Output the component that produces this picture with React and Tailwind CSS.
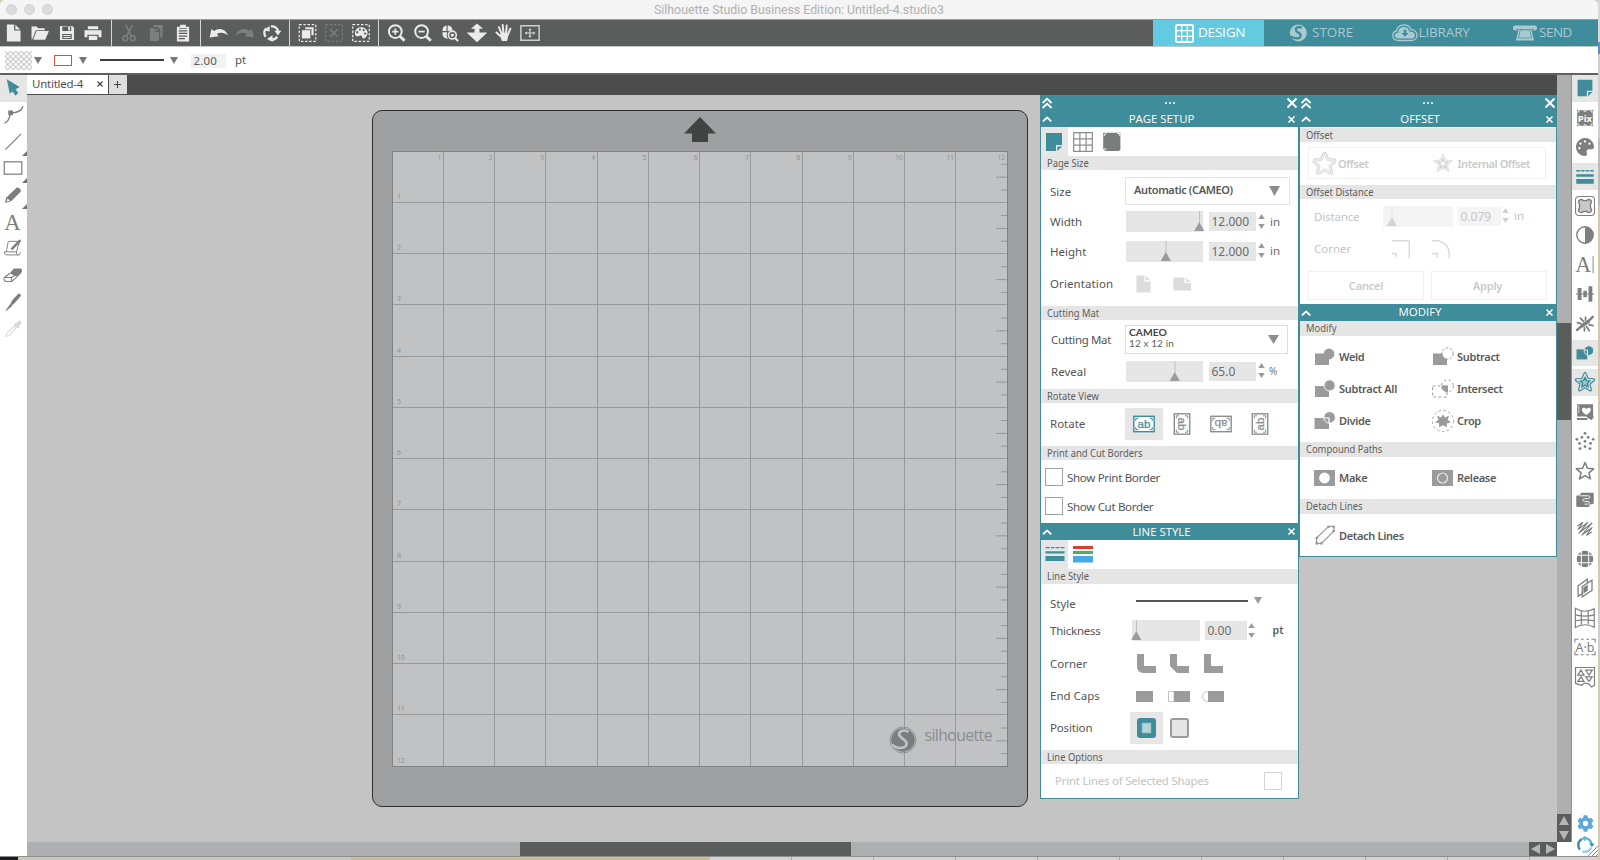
import React from "react";
import { FaPalette, FaCog } from "react-icons/fa";

const UI = "font-['Noto_Sans','Open_Sans',sans-serif]";

function Svg({ w = 20, h = 20, children, className = "" }) {
  return (
    <svg width={w} height={h} viewBox={`0 0 ${w} ${h}`} className={`shrink-0 block overflow-visible ${className}`}>
      {children}
    </svg>
  );
}

/* ---------- top toolbar ---------- */
const L = "#ebebeb";

function Arrows3({ color = L }) {
  return (
    <g fill="none" stroke={color} strokeWidth="2.6">
      <path d="M3.2 14 A7 7 0 0 1 4 5" />
      <path d="M9 3 A7 7 0 0 1 16.5 8" />
      <path d="M15.5 14 A7 7 0 0 1 7.5 16.6" />
      <g fill={color} stroke="none">
        <path d="M1 7 L7.5 2.5 L7.5 8.5 Z" />
        <path d="M12.5 7.5 L20 7.5 L16.3 12.6 Z" />
        <path d="M10.5 12.4 L10.8 19.4 L4.6 16.4 Z" />
      </g>
    </g>
  );
}

const toolGroups = [
  {
    w: "w-[112px]", items: [
      <path key="n" d="M3.5 1 H11.2 V7.4 H18 V19 H3.5 Z M12.5 1.2 L17.8 6.4 H12.5 Z" fill={L} />,
      <g key="o" fill={L}><path d="M1 17 V3 H6.5 L8 5 H15 V7 H5.5 L2.1 16 Z" /><path d="M6.3 8 H19.5 L15.5 17.3 H2.8 Z" /></g>,
      <path key="s" fillRule="evenodd" d="M2.5 2.5 H15.5 L17.5 4.5 V17.5 H2.5 Z M5 3 V8 H14.5 V3 Z M5 11 V16.5 H15 V11 Z M11.3 3.6 H13.3 V7.4 H11.3 Z M6.2 12 H13.8 V13.2 H6.2 Z M6.2 14.3 H13.8 V15.4 H6.2 Z" fill={L} />,
      <g key="p" fill={L}><path d="M4.5 2.8 H15.5 V6 H4.5 Z" /><path fillRule="evenodd" d="M1 7 H19 V14.5 H16 V11.8 H4 V14.5 H1 Z" /><path d="M5.5 13 H14.5 V17.5 H5.5 Z" /></g>,
    ],
  },
  {
    w: "w-[89px]", items: [
      <g key="c" fill="none" stroke="#7d7f7e" strokeWidth="1.7"><circle cx="5" cy="15.5" r="2.6" /><circle cx="13" cy="15.5" r="2.6" /><path d="M5.5 1.5 L11.6 13.2 M12.5 1.5 L6.4 13.2" /></g>,
      <g key="y" fill="#7d7f7e"><path d="M7.5 1.5 H17 V15 H14.6 V6 L11.5 3.5 H7.5 Z" /><path d="M3.5 5 H9.5 V9 H13.2 V18.5 H3.5 Z M10.4 5 L13.2 8 H10.4 Z" /></g>,
      <path key="v" fillRule="evenodd" fill={L} d="M3.5 3.3 H7 V1.3 H13 V3.3 H16.5 V19 H3.5 Z M5.5 7 V8.3 H14.5 V7 Z M5.5 9.8 V11.1 H14.5 V9.8 Z M5.5 12.6 V13.9 H14.5 V12.6 Z M5.5 15.4 V16.7 H12 V15.4 Z M6 4.6 V5.4 H14 V4.6 Z" />,
    ],
  },
  {
    w: "w-[89px]", items: [
      <path key="u" fill={L} d="M0 14.8 L2 5.8 L4.7 8 C9.5 4 17 5.5 19.5 12.6 C16 9.4 11.1 8.9 7.7 11 L9.8 13.4 Z" />,
      <path key="r" fill="#7d7f7e" d="M19.5 14.8 L17.5 5.8 L14.8 8 C10 4 2.5 5.5 0 12.6 C3.5 9.4 8.4 8.9 11.8 11 L9.7 13.4 Z" />,
      <Arrows3 key="a" />,
    ],
  },
  {
    w: "w-[89px]", items: [
      <g key="a"><rect x="0.7" y="1.2" width="17.6" height="17.6" fill="none" stroke={L} strokeWidth="1.3" strokeDasharray="2.6 1.8" /><path d="M7 4 H16 V12.5 H13.7 V6 H7 Z" fill={L} /><rect x="3.5" y="7" width="9" height="8.8" fill={L} /></g>,
      <g key="b" stroke="#7d7f7e" fill="none"><rect x="1.2" y="1.2" width="17.6" height="17.6" strokeWidth="1.3" strokeDasharray="2.6 1.8" /><path d="M6 6 L14 14 M14 6 L6 14" strokeWidth="1.6" /></g>,
      <g key="c"><rect x="1.2" y="1.2" width="17.6" height="17.6" fill="none" stroke={L} strokeWidth="1.3" strokeDasharray="2.6 1.8" /><path fillRule="evenodd" fill={L} d="M9.5 3.8 C14 3.6 17 6.5 17 9.8 C17 13.4 14.5 15.8 12.5 15.8 C10.5 15.8 12 12.8 10 12.6 C8 12.4 6.5 14.8 4.5 13 C2 10 4.5 4 9.5 3.8 Z M6 8 A1.2 1.2 0 1 0 6 10.4 A1.2 1.2 0 1 0 6 8 Z M8.8 5.2 A1.2 1.2 0 1 0 8.8 7.6 A1.2 1.2 0 1 0 8.8 5.2 Z M12.8 5.8 A1.2 1.2 0 1 0 12.8 8.2 A1.2 1.2 0 1 0 12.8 5.8 Z M14.4 9.4 A1.2 1.2 0 1 0 14.4 11.8 A1.2 1.2 0 1 0 14.4 9.4 Z" /></g>,
    ],
  },
  {
    w: "", items: [
      <g key="a" fill="none" stroke={L}><circle cx="8.2" cy="8.5" r="6.8" strokeWidth="2.1" /><path d="M12.9 13.2 L18 18.3" strokeWidth="3" /><path d="M8.2 5.2 V11.8 M4.9 8.5 H11.5" strokeWidth="1.8" /></g>,
      <g key="b" fill="none" stroke={L}><circle cx="8.5" cy="8.5" r="6.8" strokeWidth="2.1" /><path d="M13.2 13.2 L18.3 18.3" strokeWidth="3" /><path d="M5.2 8.5 H11.8" strokeWidth="1.8" /></g>,
      <g key="c"><path fill={L} d="M2 8 C2 4 3.5 2.3 6.3 2 V8 Z M7.5 2 C10.5 2 12.6 4 12.6 7 L9 8 H7.5 Z M2 9.2 H7 C6 11.5 6.3 14 8 16 C4 16 2 14 2 10 Z" /><circle cx="12.5" cy="12.2" r="4.2" fill="none" stroke={L} strokeWidth="1.7" /><circle cx="12.5" cy="12.2" r="1.8" fill={L} /><path d="M15.5 15.3 L18.5 18.6" stroke={L} strokeWidth="2.2" /></g>,
      <path key="d" fill={L} d="M10 0 L16.5 5.6 H12.6 V9.5 H21 L10 19.8 L-1 9.5 H7.4 V5.6 H3.5 Z" />,
      <g key="e" fill="none" stroke={L} strokeLinecap="round" strokeWidth="2.1"><path d="M2 9.4 L6.4 13.6 M4.6 3.8 L7.6 11 M8.6 1.6 L9.5 10.4 M12.9 2 L12.2 10.4 M16.8 5.4 L14 12" /><path d="M6.6 11.4 C9 10 12 10 14.2 11.2 L13.4 15.4 L12.8 18 H8.2 L7.4 15.8 Z" fill={L} strokeWidth="1.2" /></g>,
      <g key="f" fill="none" stroke="#d6d6d6"><rect x="0.3" y="2.3" width="19.4" height="15.4" strokeWidth="1.5" /><path d="M10 6 V14 M5.5 10 H14.5" strokeWidth="1.2" /><path d="M8.7 6.8 L10 5.2 L11.3 6.8 Z M8.7 13.2 L10 14.8 L11.3 13.2 Z M6.4 8.7 L4.6 10 L6.4 11.3 Z M13.6 8.7 L15.4 10 L13.6 11.3 Z" fill="#d6d6d6" strokeWidth="0.6" /></g>,
    ],
  },
];

function Toolbar() {
  return (
    <div className="flex h-[27px] shrink-0 border-b border-[#c3c6c6] bg-[#5b5d5c]">
      {toolGroups.map((g, i) => (
        <div key={i} className={`flex items-center gap-[6.8px] ${i === 0 ? "pl-[3px]" : "pl-[7.5px]"} ${g.w} ${i < 4 ? "border-r border-[#d5d5d5]" : "grow"}`}>
          {g.items.map((it, j) => <Svg key={j} className="origin-center scale-[0.94]">{it}</Svg>)}
        </div>
      ))}
      <nav className="flex w-[445px] bg-[#3f8c9a] text-[13.5px] text-[#a9cad0] font-['Open_Sans','Noto_Sans',sans-serif]">
        <div className="flex w-[111px] items-center bg-[#62cae1] pl-[22px] text-white">
          <Svg w={19} h={19}><rect x="1" y="1" width="17" height="17" rx="1.5" fill="none" stroke="#fff" strokeWidth="2" /><path d="M6.7 2 V17 M12.3 2 V17 M2 6.7 H17 M2 12.3 H17" stroke="#fff" strokeWidth="1.3" /></Svg>
          <span className="mb-[2px] ml-[4px] tracking-[-0.2px]">DESIGN</span>
        </div>
        <div className="flex w-[128px] items-center pl-[25px]">
          <Svg w={18} h={18}><circle cx="9.3" cy="9" r="8.5" fill="#a9cad0" /><path d="M12.8 3.6 C9 2 6.3 4 7 6.4 C7.8 8.8 12 8.6 11.6 12 C11.2 14.6 6 15.4 1.6 12.4" fill="none" stroke="#3f8c9a" strokeWidth="2.3" /></Svg>
          <span className="mb-[2px] ml-[5px] tracking-[0px]">STORE</span>
        </div>
        <div className="flex w-[121px] items-center">
          <Svg w={26} h={18}><path d="M6.5 16.5 C2.5 16.5 0.8 14 0.8 11.6 C0.8 9 2.5 7.3 4.6 7 C5 3.3 8 1 12 1 C15.5 1 18 3 18.7 5.5 C22.5 5.5 25 8 25 11.2 C25 14.4 22.5 16.5 19.5 16.5 Z" fill="none" stroke="#a9cad0" strokeWidth="1.3" /><path d="M7 14.6 C4.5 14.6 2.8 13.4 2.8 11.5 C2.8 9.8 4.2 8.8 6.2 8.7 C6.3 5 8.6 3 12 3 C15 3 17 5 17.2 7.4 C20.5 7.2 23 8.8 23 11.2 C23 13.2 21.5 14.6 19.3 14.6 Z" fill="#a9cad0" /><path d="M11.7 5.8 H14.3 V9 H16.6 L13 12.8 L9.4 9 H11.7 Z" fill="#3f8c9a" /></Svg>
          <span className="mb-[2px] ml-[0.5px] tracking-[-0.15px]">LIBRARY</span>
        </div>
        <div className="flex items-center">
          <Svg w={24} h={16}><rect x="0" y="0.5" width="24" height="5" rx="2" fill="#a9cad0" /><path d="M3.5 4 H20.5 V5 H3.5 Z" fill="#3f8c9a" /><path d="M5.5 4.5 H18.5 L21 15.5 H3 Z" fill="#a9cad0" /><path d="M7.2 5 H16.8 L18.5 13 H5.5 Z" fill="none" stroke="#3f8c9a" strokeWidth="0.7" /></Svg>
          <span className="mb-[2px] ml-[2px] tracking-[-0.5px]">SEND</span>
        </div>
      </nav>
    </div>
  );
}

function Down({ w = 8, h = 7, fill = "#757776", className = "" }) {
  return <Svg w={w} h={h} className={className}><path d={`M0 0 H${w} L${w / 2} ${h} Z`} fill={fill} /></Svg>;
}

function OptionBar() {
  return (
    <div className="flex h-[26px] shrink-0 items-center bg-white pl-[5px]">
      <svg width="27" height="19" className="block">
        <defs><pattern id="hatch" width="5.4" height="5.4" patternUnits="userSpaceOnUse"><path d="M0 0 L5.4 5.4 M5.4 0 L0 5.4" stroke="#c2c2c2" strokeWidth="1" /></pattern></defs>
        <rect width="27" height="19" fill="url(#hatch)" />
      </svg>
      <Down className="ml-[2px]" />
      <div className="ml-[12px] h-[11px] w-[18px] border border-[#ea4a38]" />
      <Down className="ml-[7px]" />
      <div className="ml-[13px] h-[1.5px] w-[64px] bg-[#3c3c3c]" />
      <Down className="ml-[6px]" />
      <div className="ml-[13px] mt-px flex h-[14px] w-[35px] items-center bg-[#f2f2f2] pl-[2.5px] text-[11.5px] leading-none tracking-[0.15px] text-[#5c5c5c]">2.00</div>
      <span className="mb-px ml-[9px] text-[11.5px] leading-none text-[#555]">pt</span>
    </div>
  );
}

/* ---------- left tools ---------- */
const G = "#7d7f7e";
const leftTools = [
  <path key="0" d="M3.5 0.8 L17 9 L12.8 11.4 L15.6 15.4 L12.4 18 L9.6 13.8 L6.6 16 Z" fill="#3f8c9a" />,
  <g key="1"><rect x="5" y="5.2" width="5" height="5" fill={G} /><path d="M1 18.5 C6 17 6.5 12 7.3 8 C12 7.8 19 6.5 20.5 0.8" fill="none" stroke={G} strokeWidth="1.4" /></g>,
  <path key="2" d="M2 18 L18.5 1.5" stroke={G} strokeWidth="1.3" />,
  <rect key="3" x="0.8" y="3.5" width="18.4" height="13" fill="none" stroke={G} strokeWidth="1.3" />,
  <g key="4"><path d="M1.5 18.5 L3 12.5 L13.5 2.5 C15.4 1 19.4 4.4 18 6.6 L8 16.5 Z" fill={G} /><path d="M3.2 16.8 L4.4 13.6 L6.8 16 Z" fill="#fff" /></g>,
  <text key="5" x="9.4" y="18.3" textAnchor="middle" fontSize="24" fontFamily="Liberation Serif, serif" fill={G}>A</text>,
  <g key="6" fill="none" stroke={G} strokeWidth="1"><path d="M5 3 H17 L13.6 14 M5 3 L3 14 M1 14 H13.6 C13.6 16.5 14.4 17.3 16 17.3 H3.6 C1.8 17.3 1 16 1 14 Z M16 17.3 C17.5 17 17.8 15.5 17.6 14.5" /><path d="M8.4 11.4 L17.8 1.8" stroke={G} strokeWidth="2.6" /></g>,
  <g key="7"><path d="M11 3.2 H18.4 C20 4.6 19.7 6.5 18.8 7.8 L14.4 12.2 L6.6 8.2 Z" fill={G} /><path d="M6.8 8.2 L1 12.6 C0 14 0.6 16.2 2.2 16.8 H8.6 L14 12.2 M0.8 12.7 L8.1 12.7 L8.6 16.8 M8.1 12.7 L13 10" fill="none" stroke={G} strokeWidth="1.1" /></g>,
  <g key="8" stroke={G}><path d="M16.4 3 L10.4 9.8" strokeWidth="3.8" strokeLinecap="round" /><path d="M8.6 10.5 L2.6 19 L7.2 15.6 L10.6 11.6 Z" fill={G} strokeWidth="0.8" /></g>,
  <g key="9" stroke="#d9d9d9" fill="none"><path d="M2.4 18 L3.4 14.6 L11.8 6.4 L13.8 8.4 L5.8 17 Z" strokeWidth="1.1" /><path d="M12.2 4.2 L16.4 8.4" strokeWidth="2" /><path d="M13.6 6.6 L17 3.4" strokeWidth="4.2" strokeLinecap="round" /></g>,
];

function LeftTools() {
  return (
    <div className="flex w-[27px] shrink-0 flex-col bg-white">
      {leftTools.map((t, i) => (
        <div key={i} className={`relative flex h-[26.7px] shrink-0 items-center justify-center pr-[0.5px] ${i === 0 ? "bg-[#e6e6e6]" : ""}`}>
          <Svg className="scale-[0.95]">{t}</Svg>
          {i >= 2 && i <= 4 && <Svg w={5} h={5} className="absolute bottom-[-1px] right-0"><path d="M5 0 V5 H0 Z" fill="#707271" /></Svg>}
        </div>
      ))}
    </div>
  );
}

/* ---------- right tools ---------- */
const T = "#3f8c9a";
const STAR = "M10 0.8 L12.7 7 L19.4 7.6 L14.3 12 L15.9 18.6 L10 15.1 L4.1 18.6 L5.7 12 L0.6 7.6 L7.3 7 Z";

function PageIcon() {
  return <g fill={T}><path d="M2 1 H18 V13 H12 V19 H2 Z" /><path d="M13.4 14.4 H18 L13.4 19 Z" /></g>;
}
function LinesIcon() {
  return <g fill={T}><path d="M0.5 2.5 H5 V4 H0.5 Z M6 2.5 H9.5 V4 H6 Z M10.5 2.5 H14.5 V4 H10.5 Z M15.5 2.5 H19.5 V4 H15.5 Z" /><path d="M0.5 7 H19.5 V9.6 H0.5 Z M0.5 12.2 H19.5 V17.4 H0.5 Z" /></g>;
}

const rightTools = [
  <PageIcon key="0" />,
  <g key="1"><path d="M1.5 1.5 H18.5 V18.5 H1.5 Z" fill={G} /><path d="M0.8 0.8 H3.4 V3.4 H0.8 Z M16.6 0.8 H19.2 V3.4 H16.6 Z M0.8 16.6 H3.4 V19.2 H0.8 Z M16.6 16.6 H19.2 V19.2 H16.6 Z M8.9 0.8 H11.1 V2.6 H8.9 Z M8.9 17.4 H11.1 V19.2 H8.9 Z" fill={G} stroke="#fff" strokeWidth="0.9" /><text x="10" y="14" textAnchor="middle" fontSize="10.4" fontWeight="700" fontFamily="Noto Sans, sans-serif" fill="#fff">Pix</text></g>,
  null,
  <LinesIcon key="3" />,
  <g key="4"><rect x="-0.3" y="-0.3" width="20.6" height="20.6" rx="3.5" fill="#fff" stroke={G} strokeWidth="1.1" /><path d="M4.5 3.3 C6 2.4 7.4 3 8 4.2 H12 C12.6 3 14 2.4 15.5 3.3 C17.6 4.5 17.3 6.4 16 7.4 V12.6 C17.4 13.6 17.6 15.8 15.5 16.8 C14 17.6 12.6 17 12 15.8 H8 C7.4 17 6 17.6 4.5 16.8 C2.4 15.8 2.6 13.6 4 12.6 V7.4 C2.7 6.4 2.4 4.5 4.5 3.3 Z" fill="#c9c9c9" stroke={G} strokeWidth="1.5" /></g>,
  <g key="5"><circle cx="10" cy="10" r="8.9" fill="#fff" stroke={G} strokeWidth="1.5" /><path d="M10 1.1 A8.9 8.9 0 0 1 10 18.9 Z" fill={G} /></g>,
  <g key="6"><text x="8" y="18" textAnchor="middle" fontSize="24" fontFamily="Liberation Serif, serif" fill={G}>A</text><path d="M18.8 0.5 V19" stroke={G} strokeWidth="1" /></g>,
  <g key="7" fill={G}><path d="M2 3.5 H6.2 V16.5 H2 Z M8.2 6.5 H12 V13.5 H8.2 Z M13.8 1.5 H18 V18.5 H13.8 Z M0 9.4 H20 V10.6 H0 Z" /></g>,
  <g key="8" fill="none" stroke={G} strokeLinecap="round"><path d="M1.2 16.6 L8 10.8 M12 8.6 L18.4 2.2" strokeWidth="2.6" /><path d="M6.6 12 L13.6 7.4" strokeWidth="3.6" /><path d="M5 3.6 L8.6 7.4 M1.8 8.6 L5.6 9.6 M11.6 12.6 L14.6 17.4 M14.6 10.6 L18.8 11.8 M9.4 13.6 L9.4 17.6 M10.6 2.6 L10.6 6" strokeWidth="1.9" /></g>,
  <g key="9"><path d="M0.8 6 H12.5 V17 H0.8 Z" fill={T} /><circle cx="14.2" cy="7.4" r="5.2" fill={T} stroke="#e6e6e6" strokeWidth="1" /><path d="M9.2 6.8 H12.6 V12" fill="none" stroke="#fff" strokeWidth="1" /></g>,
  <g key="10" strokeLinejoin="round"><path d={STAR} fill="none" stroke={T} strokeWidth="3.4" /><path d={STAR} fill="#e6e6e6" stroke="#e6e6e6" strokeWidth="0.8" /><path d={STAR} transform="translate(10 10.3) scale(.6) translate(-10 -10)" fill="#9fc6cd" stroke={T} strokeWidth="2.6" /></g>,
  <g key="11"><path d="M1.5 1.5 H18.8 V11.5 L19.2 16.5 L17 18.8 L13 16.6 L11.5 15 H1.5 Z" fill={G} /><path d="M11.5 13.2 C7.4 10.6 6.2 8.8 6.8 6.8 C7.6 4.8 10.4 4.8 11.5 7 C12.6 4.8 15.4 4.8 16.2 6.8 C16.8 8.8 15.6 10.6 11.5 13.2 Z" fill="#fff" /><path d="M3.2 3 V11" stroke="#fff" strokeWidth="0.7" /><path d="M1.2 17.6 H12.5" stroke={G} strokeWidth="2.2" /></g>,
  <g key="12" fill={G}>{[[10, 1.6], [6.6, 6], [13.4, 6], [1.2, 8.2], [18.8, 8.2], [4, 12.6], [10, 10.3], [16, 12.6], [4.6, 18.2], [10, 16], [15.4, 18.2]].map(([x, y], i) => <circle key={i} cx={x} cy={y} r="1.5" />)}</g>,
  <path key="13" d={STAR} fill="#fff" stroke={G} strokeWidth="1.7" strokeLinejoin="round" />,
  <g key="14"><path d="M5.5 2 H18 C19 2 19.5 2.5 19.5 3.5 V13 C19.5 14 19 14.5 18 14.5 H15 V16 C15 17 14.5 17.5 13.5 17.5 H2 C1 17.5 0.5 17 0.5 16 V6.5 C0.5 5.5 1 5 2 5 H4.5 Z" fill={G} /><path d="M5 5.4 H13.4 C15.8 5.4 15.8 8.6 13.4 8.6 H9.4 C7.2 8.6 7.2 11.6 9.4 11.6 H13.4 C15.6 11.6 15 14.5 13 14.5 H9.5" fill="none" stroke="#fff" strokeWidth="1" /></g>,
  <g key="15" fill="none" stroke={G} strokeWidth="1.3" strokeLinejoin="round" strokeLinecap="round"><path d="M2.2 6.4 L7.4 3 L2.6 10.4 L13 2.8 L3.4 14.4 L17.4 3.6 L6.6 16.6 L17.6 8.6 L11.6 16.8 L17 13.6" /></g>,
  <g key="16"><circle cx="10" cy="10" r="9" fill={G} /><path d="M6 0 V20 M14 0 V20 M0 6 H20 M0 14 H20" stroke="#fff" strokeWidth="1.1" /></g>,
  <g key="17"><path d="M2.5 7.5 L12.5 0.5 V12 L2.5 19 Z" fill="#fff" stroke={G} strokeWidth="1.4" /><path d="M7 8.4 L17.6 1.6 V12.6 L7 19.6 Z" fill="#fff" stroke={G} strokeWidth="1.4" /><path d="M8.2 9.4 L13 6.2 V13 L8.2 16.2 Z" fill={G} /></g>,
  <g key="18" fill="none" stroke={G} strokeWidth="1.3"><path d="M-0.5 -0.5 C6 3.6 13 3.6 20 0 V20 C13 16.4 6 16.4 -0.5 20.4 Z M6 2.6 V17 M13.5 2.6 V17 M-0.5 6.6 C7 8.5 13 8.5 20 6.6 M-0.5 13 C7 11.5 13 11.5 20 13" /></g>,
  <g key="19" stroke={G} fill="none"><path d="M-1 5 V1.5 H3 M5.5 1.5 H8.5 M11.5 1.5 H14.5 M17 1.5 H21 V5 M-1 15 V18.5 H3 M5.5 18.5 H8.5 M11.5 18.5 H14.5 M17 18.5 H21 V15" strokeWidth="1.1" /><text x="10" y="15" textAnchor="middle" fontSize="13.5" fontFamily="Noto Sans, sans-serif" fill={G} stroke="none">A·b</text></g>,
  <g key="20" fill="none" stroke={G} strokeWidth="1.3"><path d="M-0.3 -0.3 H20.3 V19 L17 20.8 L14 17.4 L11.5 17 H9 L6 19 L-0.3 17 Z" /><path d="M2.2 8 L5.6 2.4 L9 8 Z M10.8 2.6 H18 L14.4 8 Z M2.2 14.8 L5.6 9.8 L9 14.8 Z M10.8 9.8 H18 L14.4 14.8 Z" /></g>,
];

function RightTools() {
  return (
    <div className="flex w-[26px] shrink-0 flex-col bg-white pt-0">
      {rightTools.map((t, i) => (
        <div key={i} className={`flex h-[26.8px] shrink-0 items-center justify-center mb-[2.62px] ${[0, 3, 9, 10].includes(i) ? "bg-[#e6e6e6]" : ""}`}>
          {i === 2 ? <FaPalette className="text-[18px] text-[#7d7f7e]" /> : <Svg className="scale-[0.92]">{t}</Svg>}
        </div>
      ))}
      <div className="relative mt-auto flex flex-col items-center gap-[4px] pb-[2px]">
        <FaCog className="text-[17px] text-[#5fa8d6]" />
        <Svg w={18} h={18}><g fill="none" strokeWidth="2.4"><path d="M4 13.5 A6.7 6.7 0 0 1 6 3" stroke="#3f8c9a" /><path d="M9 2.3 A6.7 6.7 0 0 1 15.6 8" stroke="#5fb4de" /><path d="M15.3 11.4 A6.7 6.7 0 0 1 6.5 15.3" stroke="#9ad2ea" /></g><path d="M9.5 -0.5 V5.5 L5.5 2.5 Z" fill="#5fb4de" /><path d="M13 7.5 H18.5 L16 11 Z" fill="#3f8c9a" /></Svg>
        <Svg w={10} h={10} className="absolute bottom-0 right-0"><path d="M0 10 L10 0 M4 10 L10 4 M8 10 L10 8" stroke="#8a8a8a" strokeWidth="1" /></Svg>
      </div>
    </div>
  );
}

/* ---------- mat ---------- */
function Mat() {
  const c = 51.25;
  const n = Array.from({ length: 12 }, (_, i) => i + 1);
  const ticks = Array.from({ length: 48 }, (_, i) => i + 1).filter((i) => i % 4 !== 0);
  return (
    <div className="flex h-[697px] w-[656px] shrink-0 flex-col items-center rounded-[10px] border border-[#2f3030] bg-[#9fa0a2]">
      <Svg w={32} h={25} className="mt-[6px]"><path d="M16 0 L32 16.5 H24 V25 H8 V16.5 H0 Z" fill="#424343" /></Svg>
      <svg width="616" height="616" viewBox="0 0 616 616" className="mt-[9px] block shrink-0">
        <rect x="0.5" y="0.5" width="615" height="615" fill="#c0c2c4" stroke="#808284" />
        {n.slice(0, 11).map((i) => (
          <g key={i} stroke="#98999b" strokeWidth="1">
            <path d={`M${Math.floor(i * c) + 0.5} 1 V615`} />
            <path d={`M1 ${Math.floor(i * c) + 0.5} H615`} />
          </g>
        ))}
        {ticks.map((i) => <path key={i} d={`M${i % 2 === 0 ? 604 : 609} ${(i * c) / 4 + 0.5} H615`} stroke="#939597" />)}
        <g fontSize="7" fontFamily="Noto Sans, sans-serif" fill="#909294">
          {n.map((i) => <text key={i} x={i * c - 2} y="8.5" textAnchor="end" letterSpacing="-0.3">{i}</text>)}
          {n.map((i) => <text key={i} x="5" y={i * c - 3.5} letterSpacing="-0.3">{i}</text>)}
        </g>
        <circle cx="511" cy="589" r="13" fill="none" stroke="#8a8c8d" strokeWidth="0.9" />
        <circle cx="511" cy="589" r="11.8" fill="#7b7d7e" />
        <path d="M516.5 580.8 C511 578 506 580.5 507.3 584.3 C508.8 588.3 515 587.8 514.6 593 C514 597.6 505 598.8 500 593.4" fill="none" stroke="#c0c2c4" strokeWidth="2.6" />
        <text x="532.5" y="589.5" fontSize="15.8" fontFamily="Open Sans, Noto Sans, sans-serif" fill="#8b8d8f" textLength="68">silhouette</text>
      </svg>
    </div>
  );
}

/* ---------- panels ---------- */
const Chevron = ({ double }) => (
  <Svg w={11} h={12}>
    <path d={double ? "M1.6 6 L6.1 1.8 L10.6 6 M1.6 11 L6.1 6.8 L10.6 11" : "M1.9 8.4 L6.1 4.6 L10.3 8.4"} fill="none" stroke="#fff" strokeWidth="1.9" />
  </Svg>
);
const Cross = ({ s = 7, w = 1.6 }) => (
  <Svg w={s} h={s}><path d={`M0.5 0.5 L${s - 0.5} ${s - 0.5} M${s - 0.5} 0.5 L0.5 ${s - 0.5}`} stroke="#fff" strokeWidth={w} /></Svg>
);

function Head({ title, h = "h-[17px]" }) {
  return (
    <div className={`flex shrink-0 items-center bg-[#3f8c9a] pr-[3px] text-white ${h}`}>
      <Chevron />
      <span className="mb-px grow pr-[17px] text-center font-['Open_Sans'] text-[11.4px] leading-none">{title}</span>
      <Cross />
    </div>
  );
}
function Grip() {
  return (
    <div className="flex h-[16px] shrink-0 items-center bg-[#3f8c9a] pb-px pr-px">
      <Chevron double />
      <Svg w={10} h={2} className="mx-auto"><path d="M0 0 H2 V2 H0 Z M4 0 H6 V2 H4 Z M8 0 H10 V2 H8 Z" fill="#cfe3e6" /></Svg>
      <Cross s={10} w={2} />
    </div>
  );
}
function Section({ children, className = "" }) {
  return (
    <div className={`flex h-[14.4px] shrink-0 items-center bg-[#e5e5e5] pb-[1.5px] pl-[6px] text-[11.2px] leading-none text-[#5e5e5e] ${className}`}>
      <span className="origin-left scale-x-[0.84] whitespace-nowrap">{children}</span>
    </div>
  );
}
function Slider({ pos, w = 77, faint }) {
  return (
    <Svg w={w} h={21} className={`ml-px overflow-hidden ${faint ? "bg-[#f4f4f4]" : "bg-[#e6e6e6]"}`}>
      <path d={`M${pos + 0.5} 0 V12`} stroke={faint ? "#e8e8e8" : "#bfc0c1"} />
      <path d={`M${pos - 4.8} 20 L${pos + 0.3} 11 L${pos + 5.4} 20 Z`} fill={faint ? "#d4d4d4" : "#999b9d"} />
    </Svg>
  );
}
function Spin({ fill = "#999b9d" }) {
  return <Svg w={7} h={15} className="mb-px"><path d="M0.3 5 L3.5 0 L6.7 5 Z M0.3 10 L3.5 15 L6.7 10 Z" fill={fill} /></Svg>;
}
function Field({ v, w = "w-[47px]", faint }) {
  return <div className={`flex h-[19px] items-center pl-[3px] pt-px text-[12px] leading-none ${w} ${faint ? "bg-[#f4f4f4] text-[#c4c4c4]" : "bg-[#e6e6e6] text-[#6a6a6a]"}`}>{v}</div>;
}
function Label({ children, w = "w-[75px]", color = "text-[#555]", className = "" }) {
  return <span className={`shrink-0 whitespace-nowrap text-[11.5px] leading-none ${w} ${color} ${className}`}>{children}</span>;
}
function Row({ h, children, pl = "pl-[9px]", className = "" }) {
  return <div className={`flex shrink-0 items-center ${pl} ${h} ${className}`}>{children}</div>;
}
const Unit = ({ children, color = "text-[#6a6a6a]" }) => <span className={`mb-px ml-[5px] text-[11.5px] leading-none ${color}`}>{children}</span>;

function AbIcon({ deg, color = "#8b8d8f" }) {
  return (
    <Svg w={22} h={22}>
      <g transform={`rotate(${deg} 11 11)`}>
        <rect x="0.8" y="3.3" width="20.4" height="15.4" fill="#fff" stroke={color} strokeWidth="1.4" />
        <path d="M2.8 8 V5.3 H5.4 M16.6 5.3 H19.2 V8 M19.2 14 V16.7 H16.6 M5.4 16.7 H2.8 V14" fill="none" stroke={color} strokeWidth="1" />
        <text x="11" y="15.2" textAnchor="middle" fontSize="11.5" fontFamily="Liberation Sans, sans-serif" fill={color} stroke={color} strokeWidth="0.25">ab</text>
      </g>
    </Svg>
  );
}

function PageSetup() {
  return (
    <>
      <Grip />
      <Head title="PAGE SETUP" h="h-[16px]" />
      <div className="flex h-[29px] shrink-0 items-center">
        <div className="flex h-full w-[27px] items-center justify-center bg-[#e6e6e6] pr-px"><Svg><PageIcon /></Svg></div>
        <Svg className="ml-[5px]"><path d="M0.7 0.7 H19.3 V19.3 H0.7 Z M6.9 1 V19 M13.1 1 V19 M1 6.9 H19 M1 13.1 H19" fill="none" stroke="#8b8d8c" strokeWidth="1.2" /></Svg>
        <Svg className="ml-[8.5px]"><path d="M1.2 0.8 H18.4 V17.4 L16.8 19 H3.6 L1.2 16.8 Z" fill="#7b7d7c" /><path d="M2 4 A2.4 2.4 0 0 1 4.4 1.6 M15.2 1.6 H17.8 V4.2 M2.4 16 L4.4 18" fill="none" stroke="#fff" strokeWidth="1" /></Svg>
      </div>
      <Section>Page Size</Section>
      <Row h="h-[42px]">
        <Label>Size</Label>
        <div className="mb-px flex h-[28.5px] w-[165px] items-center justify-between border border-[#e4e4e4] pl-[8px] pr-[9px]">
          <span className="mb-[3px] text-[11px] font-semibold leading-none tracking-[-0.38px] text-[#585858]">Automatic (CAMEO)</span>
          <Down w={11} h={10} fill="#8b8d8e" />
        </div>
      </Row>
      <Row h="h-[19px]"><Label>Width</Label><Slider pos={73} /><div className="w-[5.5px]" /><Field v="12.000" /><div className="w-[2.5px]" /><Spin /><Unit>in</Unit></Row>
      <Row h="h-[40px]"><Label>Height</Label><Slider pos={39.5} /><div className="w-[5.5px]" /><Field v="12.000" /><div className="w-[2.5px]" /><Spin /><Unit>in</Unit></Row>
      <Row h="h-[34.6px]" className="pb-[9px]">
        <Label className="tracking-[0.1px]">Orientation</Label>
        <Svg w={15} h={18} className="ml-[11px]"><path d="M0.5 0.5 H8.5 V6.5 H14.5 V17.5 H0.5 Z M9.8 0.8 L14.3 5.2 H9.8 Z" fill="#dcdcdc" /></Svg>
        <Svg w={18} h={14} className="ml-[22px]"><path d="M0.3 0.5 H11.5 V6 H18 V13.5 H0.3 Z M13 0.8 L17.7 5 H13 Z" fill="#dcdcdc" /></Svg>
      </Row>
      <Section>Cutting Mat</Section>
      <Row h="h-[38.6px]">
        <Label className="pl-px tracking-[-0.35px]">Cutting Mat</Label>
        <div className="flex h-[28.5px] w-[163px] items-center justify-between border border-[#dedede] pl-[3px] pr-[8.5px]">
          <div className="mb-[4px] text-[#5f5f5f] font-['Lato','Noto_Sans',sans-serif]">
            <p className="text-[10.3px] font-bold leading-[12px] text-[#444]">CAMEO</p>
            <p className="text-[10px] leading-[11px] tracking-[0.1px]">12 x 12 in</p>
          </div>
          <Down w={11} h={9} fill="#8b8d8e" />
        </div>
      </Row>
      <Row h="h-[30px]" className="pb-[5px]"><Label className="pl-px">Reveal</Label><Slider pos={48.5} /><div className="w-[5.5px]" /><Field v="65.0" /><div className="w-[2.5px]" /><Spin /><span className="mb-px ml-[4px] text-[10px] leading-none text-[#777]">%</span></Row>
      <Section>Rotate View</Section>
      <Row h="h-[42.6px]" className="pb-px">
        <Label>Rotate</Label>
        <div className="flex h-[32px] w-[38px] items-center justify-center bg-[#e6e6e6]"><AbIcon deg={0} color="#3f8c9a" /></div>
        <div className="ml-[8px] flex gap-[16.8px]"><AbIcon deg={90} /><AbIcon deg={180} /><AbIcon deg={270} /></div>
      </Row>
      <Section>Print and Cut Borders</Section>
      <div className="flex h-[63px] shrink-0 flex-col justify-center gap-[11px] pl-[4px] text-[11.6px] leading-none tracking-[-0.36px] text-[#555]">
        <div className="flex items-center gap-[4px]"><div className="h-[18px] w-[18px] border border-[#a2a2a2]" />Show Print Border</div>
        <div className="flex items-center gap-[4px]"><div className="h-[18px] w-[18px] border border-[#a2a2a2]" />Show Cut Border</div>
      </div>
    </>
  );
}

function LineStyle() {
  const C = "#999b9d";
  return (
    <>
      <Head title="LINE STYLE" />
      <div className="flex h-[29px] shrink-0 items-center">
        <div className="flex h-full w-[27px] items-center justify-center bg-[#e6e6e6] pb-px"><Svg><g transform="translate(0 .5) scale(1 .95)"><LinesIcon /></g></Svg></div>
        <Svg className="mb-px ml-[5px]"><path d="M0 2 H20 V5 H0 Z" fill="#e03c31" /><path d="M0 7 H20 V10 H0 Z" fill="#4eae5c" /><path d="M0 12 H20 V18.5 H0 Z" fill="#45a9e6" /></Svg>
      </div>
      <Section>Line Style</Section>
      <Row h="h-[34px]" className="pt-[6px]"><Label>Style</Label><div className="mb-[5px] ml-[11px] h-[2px] w-[112px] bg-[#555]" /><Down className="mb-[7px] ml-[6px]" fill="#999b9d" /></Row>
      <Row h="h-[26px]"><Label w="w-[80.5px]" className="tracking-[-0.25px]">Thickness</Label><Slider pos={4} w={68} /><div className="w-[5px]" /><Field v="0.00" w="w-[42px]" /><div className="w-[1.5px]" /><Spin /><span className="mb-px ml-[17.5px] text-[10.6px] font-semibold leading-none text-[#5a5a5a]">pt</span></Row>
      <Row h="h-[41px]" className="pb-px">
        <Label w="w-[86.5px]">Corner</Label>
        <div className="flex gap-[14.5px]">
          <Svg w={19} h={19}><path d="M0 0 H7 V12 H19 V19 H6 A6 6 0 0 1 0 13 Z" fill={C} /></Svg>
          <Svg w={19} h={19}><path d="M0 0 H7 V12 H19 V19 H7 L0 12 Z" fill={C} /></Svg>
          <Svg w={19} h={19}><path d="M0 0 H7 V12 H19 V19 H0 Z" fill={C} /></Svg>
        </div>
      </Row>
      <Row h="h-[23px]">
        <Label w="w-[86px]">End Caps</Label>
        <Svg w={17} h={11}><path d="M0 0 H17 V11 H0 Z" fill={C} /></Svg>
        <Svg w={22} h={11} className="ml-[15px]"><path d="M0.5 0.5 H6 V10.5 H0.5 Z" fill="#fff" stroke="#c4c4c4" /><path d="M6 0 H22 V11 H6 Z" fill={C} /></Svg>
        <Svg w={22} h={11} className="ml-[12px]"><path d="M7 0.5 H5.5 A5 5 0 0 0 5.5 10.5 H7" fill="#fff" stroke="#c4c4c4" /><path d="M6 0 H22 V11 H6 Z" fill={C} /></Svg>
      </Row>
      <Row h="h-[42px]" className="pb-px">
        <Label w="w-[80px]" className="tracking-[-0.15px]">Position</Label>
        <div className="flex h-[32px] w-[33px] items-center justify-center bg-[#e6e6e6]"><Svg w={19} h={20}><rect x="0" y="0" width="19" height="20" rx="3" fill="#3f8c9a" /><rect x="5" y="5" width="9" height="10" fill="#b9d3d8" stroke="#7fb0b9" strokeWidth="0.6" /></Svg></div>
        <Svg w={19} h={20} className="ml-[7px]"><rect x="1" y="1" width="17" height="18" rx="2" fill="#e6e6e6" stroke={C} strokeWidth="2" /></Svg>
      </Row>
      <Section>Line Options</Section>
      <Row h="h-[34px]" pl="pl-[14px]"><span className="w-[209px] whitespace-nowrap text-[11.4px] leading-none tracking-[-0.2px] text-[#c2c2c2]">Print Lines of Selected Shapes</span><div className="h-[18px] w-[18px] border border-[#d4d4d4]" /></Row>
    </>
  );
}

function Cmd({ icon, children }) {
  return <div className="flex w-[118px] items-center whitespace-nowrap text-[11px] font-semibold leading-none tracking-[-0.33px] text-[#5a5a5a]"><div className="mr-[3px] flex w-[23px] justify-center">{icon}</div><span>{children}</span></div>;
}

function Offset() {
  const faint = "text-[#c4c4c4]";
  return (
    <>
      <Grip />
      <Head title="OFFSET" h="h-[16px]" />
      <Section className="mt-px">Offset</Section>
      <div className="ml-[8px] mt-[5px] flex h-[32px] w-[238px] shrink-0 items-center border border-[#f1f1f1] text-[11px] font-semibold leading-none tracking-[-0.45px] text-[#cacaca]">
        <Svg w={25} h={25} className="ml-[3px]"><g transform="translate(2.5 2.5)" strokeLinejoin="round"><path d={STAR} fill="none" stroke="#d2d2d2" strokeWidth="5" /><path d={STAR} fill="none" stroke="#f4f4f4" strokeWidth="3" /><path d={STAR} fill="#fff" stroke="#dcdcdc" strokeWidth="1" /></g></Svg>
        <span className="ml-px w-[94px]">Offset</span>
        <Svg w={22} h={22}><g transform="translate(1 1)"><path d={STAR} fill="#f1f1f1" stroke="#dedede" /><path d={STAR} transform="translate(10 10.5) scale(.5) translate(-10 -10)" fill="#fff" stroke="#cfcfcf" strokeWidth="2.4" /></g></Svg>
        <span className="ml-[3.5px] whitespace-nowrap">Internal Offset</span>
      </div>
      <Section className="mt-[5.6px]">Offset Distance</Section>
      <Row h="h-[34px]" pl="pl-[14px]"><Label w="w-[67.5px]" color={faint} className="tracking-[-0.15px]">Distance</Label><Slider pos={8.5} w={70} faint /><div className="w-[5px]" /><Field v="0.079" w="w-[43px]" faint /><div className="w-[1.5px]" /><Spin fill="#cfcfcf" /><Unit color={faint}>in</Unit></Row>
      <Row h="h-[34px]" pl="pl-[14px]" className="pb-[3px]">
        <Label w="w-[78px]" color={faint}>Corner</Label>
        <Svg w={18} h={18}><path d="M0 0.8 H17.2 V18 M0 13.5 H4.2 V17.5" fill="none" stroke="#dadada" strokeWidth="1.4" /></Svg>
        <Svg w={18} h={18} className="ml-[22px]"><path d="M0 0.8 H4 A13 13 0 0 1 17.2 14 V18 M0 13.5 H5.2 V17.5" fill="none" stroke="#dadada" strokeWidth="1.4" /></Svg>
      </Row>
      <div className="flex h-[36.8px] shrink-0 gap-[6.5px] pl-[8px] pt-[4px] text-[11px] font-semibold leading-none tracking-[-0.2px] text-[#cacaca]">
        <div className="flex h-[28.5px] w-[116px] items-center justify-center border border-[#f1f1f1]">Cancel</div>
        <div className="flex h-[28.5px] w-[116px] items-center justify-center border border-[#f1f1f1] pr-[2px]">Apply</div>
      </div>
    </>
  );
}

function Modify() {
  const C = "#999b9d";
  const I = ({ children }) => <Svg w={22} h={20}>{children}</Svg>;
  return (
    <>
      <Head title="MODIFY" />
      <Section>Modify</Section>
      <div className="grid h-[106.6px] shrink-0 grid-cols-[118px_118px] content-center gap-y-[12px] pl-[13px]">
        <Cmd icon={<I><path d="M1 6.5 H15 V18 H1 Z" fill={C} /><circle cx="15" cy="7" r="5.4" fill={C} /></I>}>Weld</Cmd>
        <Cmd icon={<I><path d="M1 6.5 H10.6 A5.4 5.4 0 0 0 15 12 V18 H1 Z" fill={C} /><circle cx="15.6" cy="6.6" r="5.6" fill="none" stroke={C} strokeDasharray="2.4 1.6" /></I>}>Subtract</Cmd>
        <Cmd icon={<I><path d="M1 7 H15 V18 H1 Z" fill={C} /><circle cx="15.6" cy="6.4" r="5.6" fill={C} stroke="#fff" /></I>}>Subtract All</Cmd>
        <Cmd icon={<I><rect x="0.5" y="7" width="14.5" height="11" fill="none" stroke={C} strokeDasharray="2.8 2.4" /><circle cx="15.4" cy="7" r="6" fill="none" stroke={C} strokeDasharray="2.4 2.4" /><path d="M9.6 6.4 H16 V13.2 A6.4 6.4 0 0 1 9.6 6.4 Z" fill={C} /></I>}>Intersect</Cmd>
        <Cmd icon={<I><path d="M0.5 7 H15 V18 H0.5 Z" fill={C} /><circle cx="15.6" cy="6.4" r="5.8" fill={C} stroke="#fff" /><path d="M9.8 7 H15 V12.4" fill="none" stroke="#fff" strokeWidth="1.2" /></I>}>Divide</Cmd>
        <Cmd icon={<I><circle cx="11" cy="10" r="10.6" fill="none" stroke={C} strokeWidth="0.9" strokeDasharray="2.6 2.4" /><path d="M11 3.2 L13 6.6 L17.2 4.6 L15.6 8.6 L18.8 11.4 L15 12.2 L14.8 16.2 L11 14.2 L7.2 16.2 L7 12.2 L3.2 11.4 L6.4 8.6 L4.8 4.6 L9 6.6 Z" fill={C} /></I>}>Crop</Cmd>
      </div>
      <Section>Compound Paths</Section>
      <div className="flex h-[42.6px] shrink-0 items-center pl-[13px]">
        <Cmd icon={<Svg w={21} h={16}><path d="M0 0 H21 V16 H0 Z" fill={C} /><circle cx="10.5" cy="8" r="5.4" fill="#fff" /></Svg>}>Make</Cmd>
        <Cmd icon={<Svg w={21} h={16}><path d="M0 0 H21 V16 H0 Z" fill={C} /><circle cx="10.5" cy="8" r="5" fill="none" stroke="#e9e9e9" strokeWidth="1.2" /></Svg>}>Release</Cmd>
      </div>
      <Section>Detach Lines</Section>
      <div className="flex h-[42px] shrink-0 items-center pl-[13px] pt-px">
        <Cmd icon={<Svg><g fill="none" stroke={C} strokeWidth="1.2"><path d="M1.5 18.5 V13 L13.5 1.5 H19 V6 L6.5 18.5 Z" /><path d="M0.7 17.2 H3 V19.4 H0.7 Z M0.7 12 H3 V14 H0.7 Z M12.5 0.7 H14.7 V2.8 H12.5 Z M17.6 0.7 H19.8 V2.8 H17.6 Z M17.6 5 H19.8 V7 H17.6 Z M5.4 17.2 H7.6 V19.4 H5.4 Z" fill={C} strokeWidth="0.2" /></g></Svg>}>Detach Lines</Cmd>
      </div>
    </>
  );
}

function ArrowBtn({ d }) {
  return <Svg w={14} h={14} className="bg-[#5b5d5c]"><path d={d} fill="#b4b6b7" /></Svg>;
}

export default function App() {
  return (
    <div className={`flex h-[860px] w-[1600px] overflow-hidden bg-[#d3cab4] ${UI}`}>
      <div className="flex w-[1598px] shrink-0 flex-col">
        <div className="relative flex h-[20px] shrink-0 items-center justify-center rounded-t-[5px] border-b border-[#9a9a9a] bg-[#f5f5f5] pt-px font-['Roboto','Inter',sans-serif] text-[12.4px] tracking-[-0.03px] text-[#b1b1b1]">
          <div className="absolute left-[6px] top-[4px] flex gap-[7px]">
            {[0, 1, 2].map((i) => <div key={i} className="h-[11px] w-[11px] rounded-full border border-[#d2d2d2] bg-[#dcdcdc]" />)}
          </div>
          Silhouette Studio Business Edition: Untitled-4.studio3
        </div>
        <Toolbar />
        <OptionBar />
        <div className="flex h-[783px] shrink-0 border-t-2 border-[#5f6060]">
          <LeftTools />
          <div className="flex w-[1545px] shrink-0 flex-col">
            <div className="flex h-[767px] shrink-0">
              <div className="flex w-[1530px] shrink-0 flex-col">
                <div className="flex h-[20px] shrink-0 bg-[#4a4b4a] pb-px text-[11.5px] leading-none text-[#505050]">
                  <div className="flex w-[80.5px] items-center justify-between bg-white pb-px pl-[5px] pr-[5px]"><span className="tracking-[-0.25px]">Untitled-4</span><Svg w={6} h={6}><path d="M0.5 0.5 L5.5 5.5 M5.5 0.5 L0.5 5.5" stroke="#444" strokeWidth="1.2" /></Svg></div>
                  <div className="ml-px flex w-[18px] items-center justify-center bg-[#dedede] pb-px"><Svg w={7} h={7}><path d="M3.5 0 V7 M0 3.5 H7" stroke="#444" strokeWidth="1.1" /></Svg></div>
                </div>
                <div className="flex h-[747px] shrink-0 items-start bg-[#c4c4c4] pl-[345px]">
                  <div className="pt-[15px]"><Mat /></div>
                  <div className="ml-[12px] flex w-[259px] shrink-0 flex-col border-x border-b border-[#3f8c9a] bg-white">
                    <PageSetup />
                    <LineStyle />
                  </div>
                  <div className="flex w-[258px] shrink-0 flex-col border-x border-b border-[#3f8c9a] bg-white">
                    <Offset />
                    <Modify />
                  </div>
                </div>
              </div>
              <div className="flex w-[15px] shrink-0 flex-col border-r border-[#8f9192] bg-[#adafb0]">
                <div className="h-[248px] shrink-0" />
                <div className="h-[97px] shrink-0 bg-[#5b5d5c]" />
                <div className="mt-auto"><ArrowBtn d="M7 2 L12 11 H2 Z" /><ArrowBtn d="M7 12 L12 3 H2 Z" /></div>
              </div>
            </div>
            <div className="flex h-[14px] shrink-0">
              <div className="flex w-[1530px] shrink-0 bg-[#adafb0]">
                <div className="w-[493px] shrink-0" />
                <div className="w-[331px] shrink-0 bg-[#5b5d5c]" />
                <div className="ml-auto flex"><ArrowBtn d="M2 7 L11 2 V12 Z" /><ArrowBtn d="M12 7 L3 2 V12 Z" /></div>
              </div>
              <div className="w-[15px] bg-white" />
            </div>
          </div>
          <RightTools />
        </div>
        <div className="flex h-[4px] shrink-0 border-t border-[#8e8e8e] bg-[#d4d4d4]">
          <div className="w-[18px] bg-[#1e1a22]" />
          <div className="w-[333px] bg-[#c9c6bc]" />
          <div className="w-[359px] bg-[#c9bd94]" />
          {Array.from({ length: 10 }, (_, i) => <div key={i} className="w-[82px] border-r border-[#a5a5a5]" />)}
        </div>
      </div>
      <div className="flex grow flex-col">
        <div className="h-[42px] bg-[#d8d8d8]" />
        <div className="h-[12px] bg-[#5e8fc4]" />
        <div className="h-[84px] bg-[#cfcfcf]" />
        <div className="h-[67px] bg-[#bcbcbc]" />
        <div className="h-[400px] bg-[#d3c8ac]" />
        <div className="h-[50px] bg-[#cfcfcf]" />
        <div className="grow bg-[#d3cab4]" />
      </div>
    </div>
  );
}
